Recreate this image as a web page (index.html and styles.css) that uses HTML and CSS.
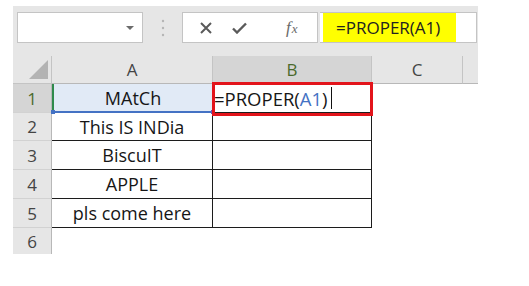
FILE: index.html
```html
<!DOCTYPE html>
<html lang="en">
<head>
    <meta charset="UTF-8">
    <title>PROPER function</title>
    <link rel="stylesheet" href="styles.css">
</head>
<body>

    <div class="excel">
        <div class="formula-bar">
            <div class="name-box"><span class="caret"></span></div>
            <div class="grip">
                <svg width="4" height="18" viewBox="0 0 4 18">
                    <circle cx="2" cy="2" r="1.2"></circle>
                    <circle cx="2" cy="9" r="1.2"></circle>
                    <circle cx="2" cy="16" r="1.2"></circle>
                </svg>
            </div>
            <div class="fx-tools">
                <svg class="icon-cancel" width="12" height="12" viewBox="0 0 12 12">
                    <path d="M1 1 L11 11 M11 1 L1 11"></path>
                </svg>
                <svg class="icon-enter" width="15" height="12" viewBox="0 0 15 12">
                    <path d="M1 6.5 L5 10.5 L14 1.5"></path>
                </svg>
                <span class="fx"><i>f</i><i class="sub">x</i></span>
            </div>
            <div class="formula-input">
                <span class="highlight">=PROPER(A1)</span>
            </div>
        </div>

        <div class="sheet">
            <div class="corner"><span class="triangle"></span></div>
            <div class="col-head">A</div>
            <div class="col-head active">B</div>
            <div class="col-head">C</div>
            <div class="col-head rest"></div>

            <div class="row-head active">1</div>
            <div class="cell boxed ref">MAtCh</div>
            <div class="cell boxed editing">
                <span>=PROPER(</span><span class="ref-text">A1</span><span>)</span><span class="cursor"></span>
            </div>
            <div class="cell"></div>
            <div class="cell"></div>

            <div class="row-head">2</div>
            <div class="cell boxed">This IS INDia</div>
            <div class="cell boxed"></div>
            <div class="cell"></div>
            <div class="cell"></div>

            <div class="row-head">3</div>
            <div class="cell boxed">BiscuIT</div>
            <div class="cell boxed"></div>
            <div class="cell"></div>
            <div class="cell"></div>

            <div class="row-head">4</div>
            <div class="cell boxed">APPLE</div>
            <div class="cell boxed"></div>
            <div class="cell"></div>
            <div class="cell"></div>

            <div class="row-head">5</div>
            <div class="cell boxed">pls come here</div>
            <div class="cell boxed"></div>
            <div class="cell"></div>
            <div class="cell"></div>

            <div class="row-head last">6</div>
            <div class="cell"></div>
            <div class="cell"></div>
            <div class="cell"></div>
            <div class="cell"></div>
        </div>
    </div>

</body>
</html>
```

FILE: styles.css
```css
:root {
    --chrome: #e6e6e6;
    --chrome-dark: #d5d5d5;
    --chrome-line: #c4c4c4;
    --cell-line: #1c1c1c;
    --text: #161616;
    --head-text: #444;
    --select-text: #4b6a2c;
    --ref-blue: #4472c4;
}

*, *::before, *::after {
    box-sizing: border-box;
    margin: 0;
    padding: 0;
}

body {
    background: #fff;
    font-family: 'Open Sans', 'Liberation Sans', Arial, sans-serif;
    color: var(--text);
}

.excel {
    width: 465px;
    margin: 6px 0 0 13px;
}

/* formula bar */

.formula-bar {
    display: flex;
    align-items: stretch;
    height: 50px;
    padding: 6px 1px 13px 4px;
    background: var(--chrome);
}

.name-box {
    width: 126px;
    background: #fff;
    border: 1px solid var(--chrome-line);
    display: flex;
    align-items: center;
    justify-content: flex-end;
    padding-right: 8px;
}

.caret {
    width: 0;
    height: 0;
    border-left: 4px solid transparent;
    border-right: 4px solid transparent;
    border-top: 4px solid #6b6b6b;
}

.grip {
    width: 39px;
    display: flex;
    align-items: center;
    justify-content: center;
}

.grip circle {
    fill: #b5b5b5;
}

.fx-tools {
    width: 136px;
    background: #fff;
    border: 1px solid var(--chrome-line);
    display: flex;
    align-items: center;
    padding-left: 17px;
}

.fx-tools path {
    fill: none;
    stroke: #5a5a5a;
    stroke-width: 2;
}

.icon-enter {
    margin-left: 20px;
}

.icon-enter path {
    stroke-width: 2.4;
}

.fx {
    margin-left: 39px;
    font-family: 'Liberation Serif', 'Times New Roman', serif;
    color: #6a6a6a;
    font-size: 17px;
    line-height: 1;
}

.fx .sub {
    font-size: 13px;
    margin-left: 1px;
}

.formula-input {
    flex: 1;
    margin-left: 2px;
    background: #fff;
    border: 1px solid var(--chrome-line);
    border-left: none;
    padding: 0 0 0 3px;
    display: flex;
}

.highlight {
    width: 133px;
    background: #ffff00;
    display: flex;
    align-items: center;
    padding-left: 13px;
    font-size: 17px;
    color: #222;
}

/* grid */

.sheet {
    display: grid;
    grid-template-columns: 39px 161px 159px 91px 15px;
    grid-template-rows: 28px 29px 28px 29px 29px 29px 26px;
    font-size: 18px;
}

.corner,
.col-head,
.row-head {
    background: var(--chrome);
    color: var(--head-text);
    display: flex;
    align-items: center;
    justify-content: center;
    font-size: 17px;
}

.corner {
    align-items: flex-end;
    justify-content: flex-end;
    padding: 0 3px 4px 0;
    border-right: 1px solid var(--chrome-line);
    border-bottom: 1px solid var(--chrome-line);
}

.triangle {
    width: 0;
    height: 0;
    border-left: 19px solid transparent;
    border-bottom: 19px solid #b3b3b3;
}

.col-head {
    border-right: 1px solid var(--chrome-line);
    border-bottom: 1px solid #b8b8b8;
}

.col-head.rest {
    border-right: none;
}

.row-head {
    border-right: 1px solid #b8b8b8;
    border-bottom: 1px solid #d2d2d2;
}

.row-head.last {
    border-bottom: none;
}

.col-head.active,
.row-head.active {
    background: var(--chrome-dark);
    color: var(--select-text);
}

.cell {
    background: #fff;
    display: flex;
    align-items: center;
    justify-content: center;
    white-space: nowrap;
}

.cell.boxed {
    border-right: 1px solid var(--cell-line);
    border-bottom: 1px solid var(--cell-line);
}

.cell.ref {
    position: relative;
    background: #e1eaf6;
    border-left: 2px solid #2f8a4c;
    border-bottom: 2px solid var(--ref-blue);
}

.cell.ref::before,
.cell.ref::after {
    content: '';
    position: absolute;
    bottom: -3px;
    width: 4px;
    height: 4px;
    background: var(--ref-blue);
}

.cell.ref::before {
    left: -3px;
}

.cell.ref::after {
    right: -3px;
    background: #6a5bb5;
}

.cell.editing {
    position: relative;
    justify-content: flex-start;
    padding-left: 1px;
    font-size: 18.5px;
}

.cell.editing::after {
    content: '';
    position: absolute;
    left: -1px;
    right: -2px;
    top: -2px;
    bottom: -4px;
    border: 3px solid #e3141b;
}

.ref-text {
    color: var(--ref-blue);
}

.cursor {
    width: 1px;
    height: 22px;
    background: #111;
    margin-left: 3px;
}
```
